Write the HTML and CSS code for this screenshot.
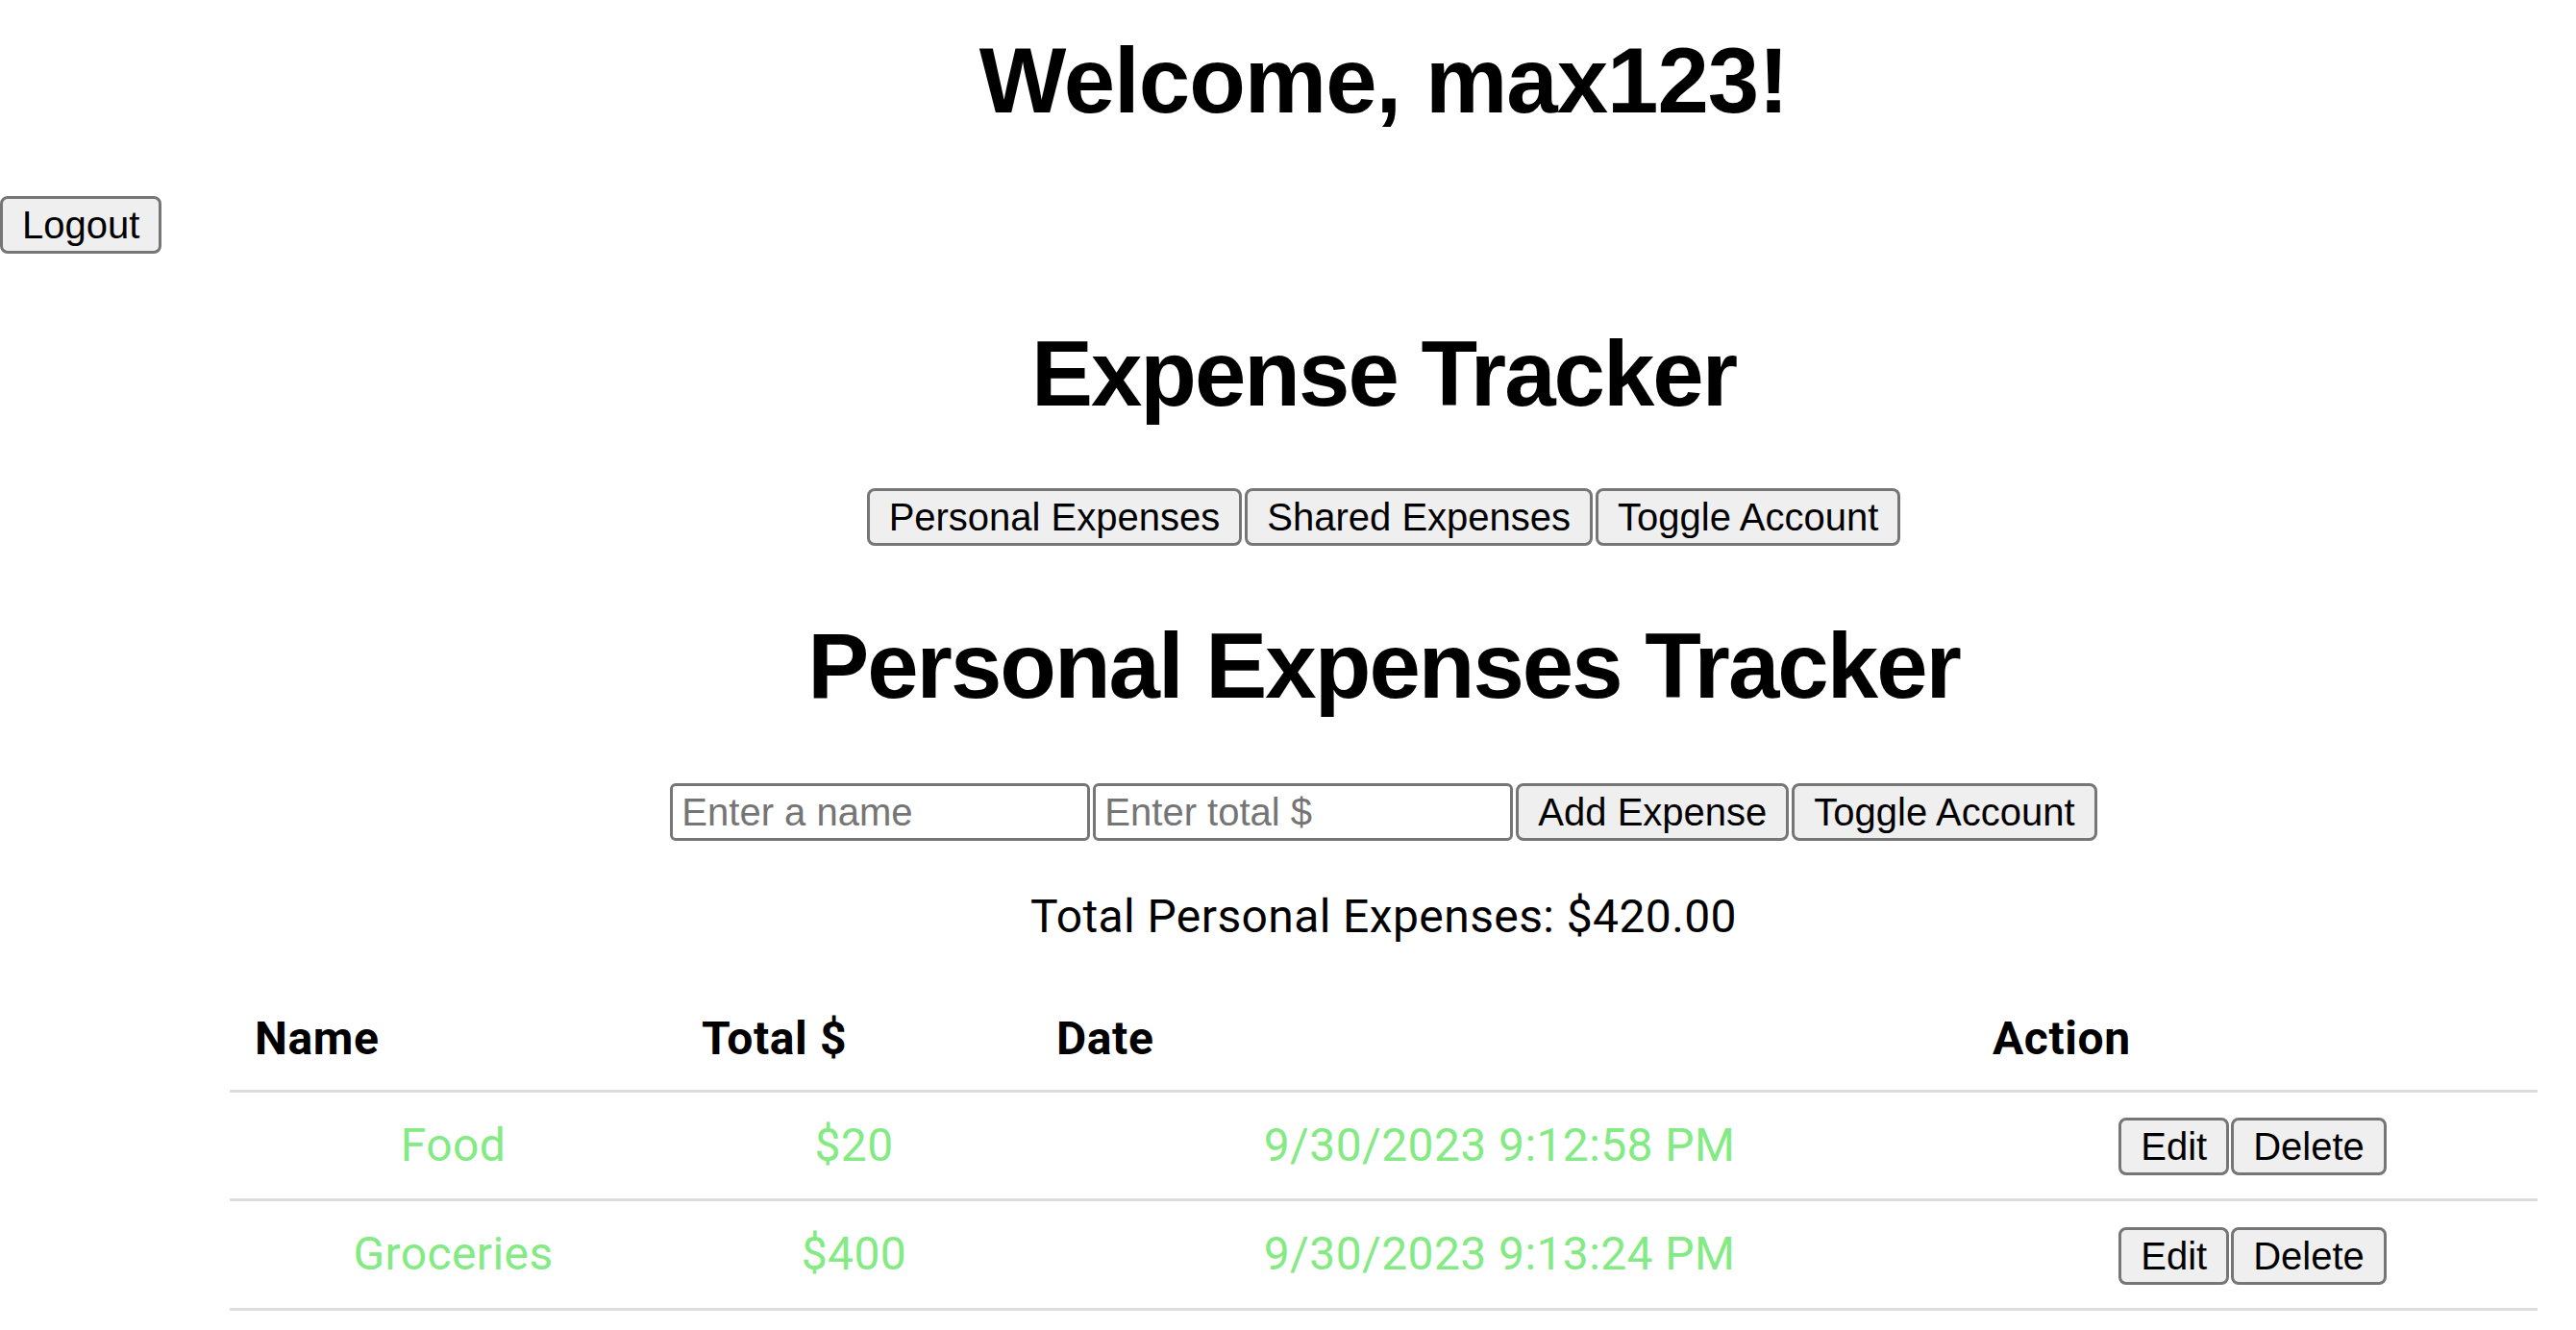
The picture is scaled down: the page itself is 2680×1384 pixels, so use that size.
FILE: index.html
```html
<!DOCTYPE html>
<html lang="en">
<head>
<meta charset="utf-8">
<title>Expense Tracker</title>
<link rel="stylesheet" href="styles.css">
</head>
<body>
  <section class="page page-top">
    <h1 class="title welcome">Welcome, max123!</h1>
  </section>
  <div class="logout-row">
    <button class="btn">Logout</button>
  </div>
  <section class="page">
    <h1 class="title section-title">Expense Tracker</h1>
    <div class="controls nav"><button class="btn">Personal Expenses</button><button class="btn">Shared Expenses</button><button class="btn">Toggle Account</button></div>
    <h1 class="title section-title">Personal Expenses Tracker</h1>
    <div class="controls form"><input class="field" type="text" placeholder="Enter a name"><input class="field" type="text" placeholder="Enter total $"><button class="btn">Add Expense</button><button class="btn">Toggle Account</button></div>
    <p class="total">Total Personal Expenses: $420.00</p>
    <table class="expenses">
      <colgroup>
        <col class="c-name"><col class="c-total"><col class="c-date"><col class="c-action">
      </colgroup>
      <thead>
        <tr><th>Name</th><th>Total $</th><th>Date</th><th>Action</th></tr>
      </thead>
      <tbody>
        <tr>
          <td>Food</td><td>$20</td><td>9/30/2023 9:12:58 PM</td>
          <td class="actions"><button class="btn">Edit</button><button class="btn">Delete</button></td>
        </tr>
        <tr>
          <td>Groceries</td><td>$400</td><td>9/30/2023 9:13:24 PM</td>
          <td class="actions"><button class="btn">Edit</button><button class="btn">Delete</button></td>
        </tr>
      </tbody>
    </table>
  </section>
</body>
</html>
```
FILE: styles.css
```css
html, body {
  margin: 0;
  padding: 0;
  background: #ffffff;
  color: #000000;
}

body {
  font-family: Roboto, "Noto Sans", sans-serif;
  font-size: 48px;
  letter-spacing: 0.4px;
}

.page {
  margin: 0 40px 0 239px;
  text-align: center;
}

.page-top {
  padding-top: 29px;
}

.title {
  font-family: "Liberation Sans", Arial, sans-serif;
  font-weight: 700;
  font-size: 96px;
  line-height: 110px;
  letter-spacing: -2px;
  margin: 0;
}

.welcome {
  letter-spacing: -1px;
  margin-bottom: 65px;
}

.section-title {
  margin-top: 70px;
}

.logout-row {
  display: flex;
}

.btn {
  font-family: "Liberation Sans", Arial, sans-serif;
  font-size: 40px;
  line-height: 46px;
  letter-spacing: 0;
  padding: 4px 20px;
  border: 3px solid #767676;
  border-radius: 8px;
  background: #efefef;
  color: #000000;
  margin: 0;
}

.controls {
  display: flex;
  justify-content: center;
  gap: 3px;
}

.nav {
  margin-top: 64px;
}

.form {
  margin-top: 67px;
}

.field {
  box-sizing: border-box;
  width: 437px;
  font-family: "Liberation Sans", Arial, sans-serif;
  font-size: 40px;
  line-height: 46px;
  letter-spacing: 0;
  padding: 4px 9px;
  border: 3px solid #767676;
  border-radius: 6px;
  background: #ffffff;
  color: #000000;
  margin: 0;
}

.field::placeholder {
  color: #757575;
}

.total {
  margin: 50px 0 45px;
  font-size: 48px;
  line-height: 58px;
}

.expenses {
  width: 100%;
  border-collapse: collapse;
  table-layout: fixed;
}

.c-name { width: 465px; }
.c-total { width: 369px; }
.c-date { width: 974px; }

.expenses th {
  text-align: left;
  font-weight: 700;
  letter-spacing: 0.6px;
  padding: 24px 26px;
  line-height: 58px;
  border-bottom: 3px solid #dddddd;
}

.expenses td {
  text-align: center;
  padding: 24px 26px;
  line-height: 58px;
  color: #84ea84;
  border-bottom: 3px solid #dddddd;
  vertical-align: middle;
}

.actions .btn {
  vertical-align: middle;
  margin: 0 1px;
}
```
